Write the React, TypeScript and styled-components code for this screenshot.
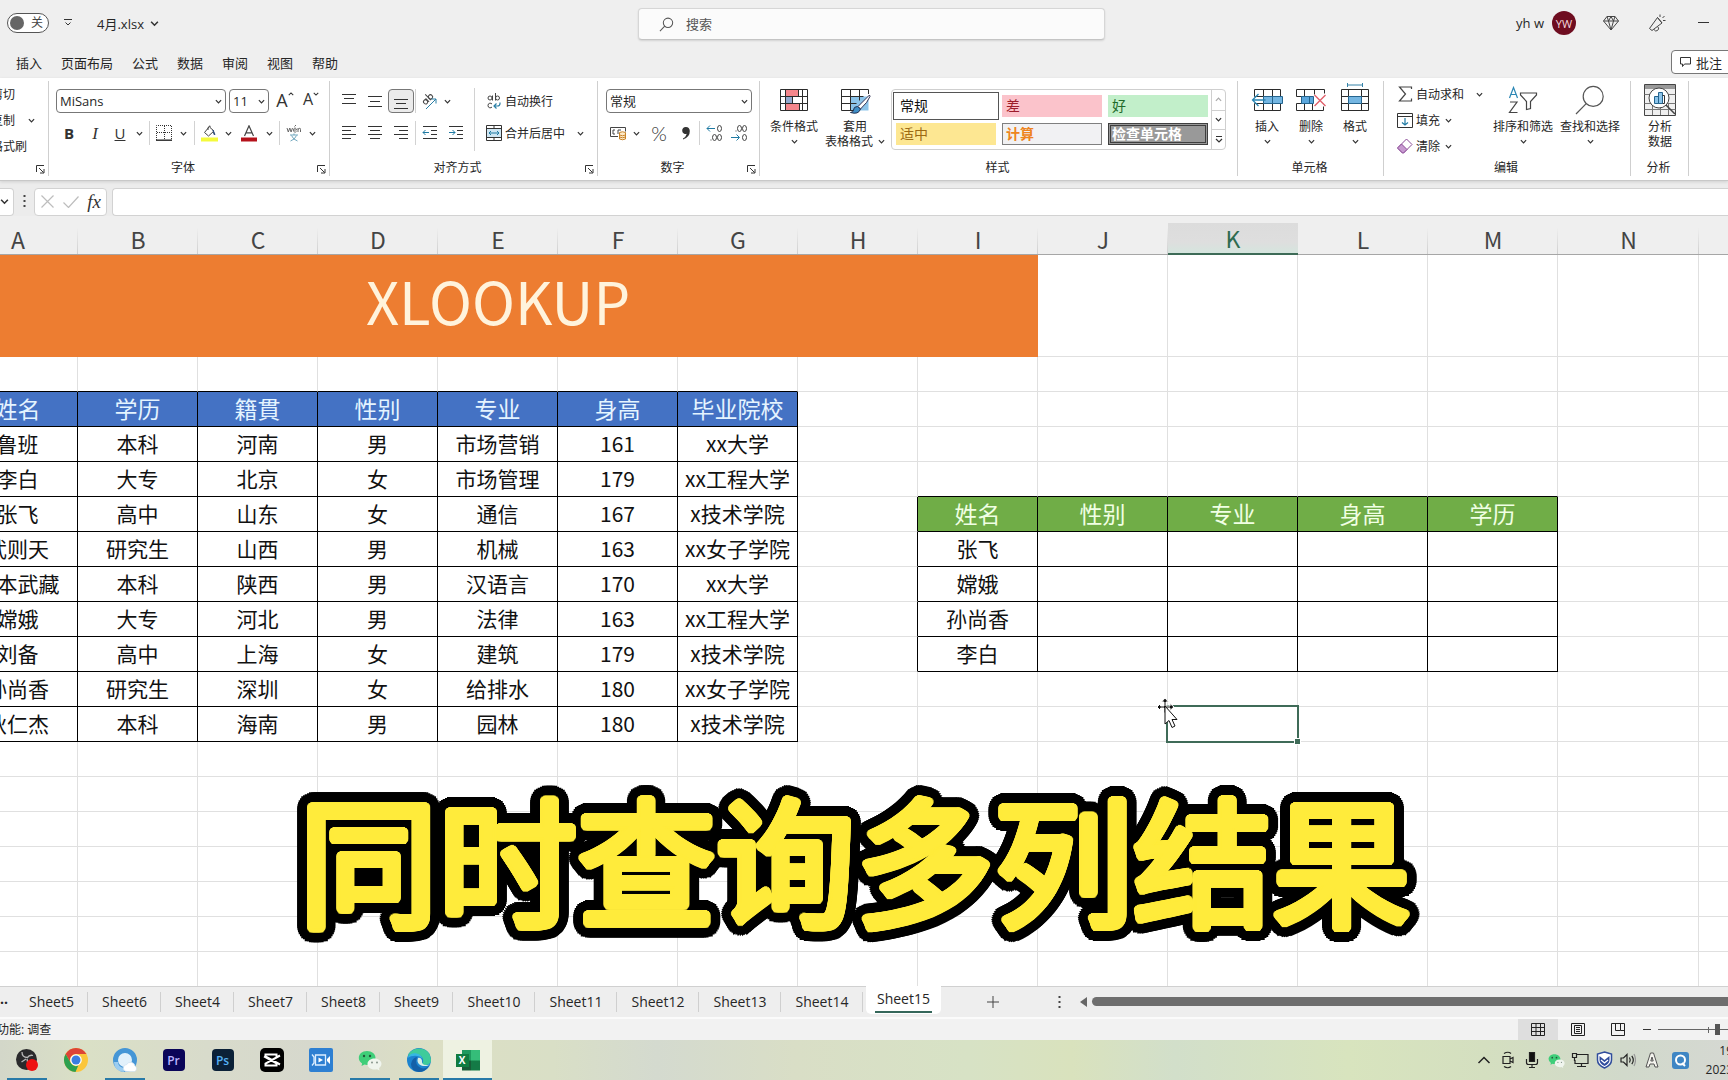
import React from "react";
import styled, { createGlobalStyle, css } from "styled-components";

const UI_FONT = `"Open Sans", "Noto Sans CJK SC", sans-serif`;
const CELL_FONT = `"Noto Sans CJK SC", sans-serif`;

const GlobalStyle = createGlobalStyle`
  *, *::before, *::after { box-sizing: border-box; }
  html, body, #root { height: 100%; }
  body { margin: 0; overflow: hidden; background: #efefef; font-family: ${UI_FONT}; font-size: 12px; color: #262626; }
  button, input, select { font: inherit; color: inherit; margin: 0; padding: 0; border: 0; background: none; border-radius: 0; }
  svg { display: block; flex: none; }
`;

/* ---------- shell ---------- */

const Shell = styled.div`
  display: flex;
  flex-direction: column;
  height: 100vh;
  overflow: hidden;
  position: relative;
`;

const TitleBar = styled.header`
  display: grid;
  grid-template-columns: 638fr 467fr 623fr;
  align-items: center;
  height: 46px;
  flex: none;
`;

const TitleLeft = styled.div`
  display: flex;
  align-items: center;
  padding-left: 7px;
  gap: 14px;
  font-size: 13px;
`;

const Toggle = styled.button`
  display: flex;
  align-items: center;
  justify-content: space-between;
  width: 42px;
  height: 20px;
  padding: 0 5px 0 2px;
  border: 1px solid #555;
  border-radius: 10px;
  background: #fff;
  font-size: 12px;
  line-height: 18px;
  color: #444;
  &::before {
    content: "";
    width: 14px;
    height: 14px;
    border-radius: 50%;
    background: #666;
  }
`;

const FileName = styled.button`
  display: flex;
  align-items: center;
  gap: 6px;
  margin-left: 10px;
`;

const IconButton = styled.button<{ $w?: number; $h?: number; $pressed?: boolean }>`
  display: flex;
  align-items: center;
  justify-content: center;
  flex: none;
  width: ${(p) => p.$w ?? 26}px;
  height: ${(p) => p.$h ?? 24}px;
  ${(p) =>
    p.$pressed &&
    css`
      border: 1px solid #777;
      border-radius: 4px;
      background: #ebebeb;
    `}
`;

const SizeButton = styled(IconButton)`
  align-items: flex-start;
  padding-top: 2px;
`;

const SearchBox = styled.label`
  display: flex;
  align-items: center;
  gap: 12px;
  height: 32px;
  padding-left: 20px;
  margin-top: 2px;
  background: #fbfbfb;
  border: 1px solid #d6d6d6;
  border-bottom-color: #c4c4c4;
  border-radius: 4px;
  box-shadow: 0 1px 2px rgba(0, 0, 0, 0.12);
  input {
    flex: 1;
    min-width: 0;
    outline: none;
    font-size: 13px;
  }
  input::placeholder { color: #555; opacity: 1; }
`;

const TitleRight = styled.div`
  display: flex;
  align-items: center;
  justify-content: flex-end;
  padding-right: 12px;
  font-size: 13px;
`;

const Avatar = styled.span`
  display: grid;
  place-items: center;
  width: 24px;
  height: 24px;
  margin: 0 22px 0 8px;
  border-radius: 50%;
  background: #6e0d20;
  color: #f3d9de;
  font-size: 11px;
`;

const MenuBar = styled.nav`
  display: flex;
  align-items: center;
  height: 32px;
  flex: none;
  gap: 19px;
  padding-left: 16px;
  font-size: 13px;
  button { flex: none; white-space: nowrap; }
`;

const CommentButton = styled.button`
  display: flex;
  align-items: center;
  gap: 4px;
  height: 24px;
  margin: 0 -8px 0 auto;
  padding: 0 13px 0 7px;
  border: 1px solid #777;
  border-radius: 4px;
  background: #fff;
`;

/* ---------- ribbon ---------- */

const Ribbon = styled.section`
  display: flex;
  height: 103px;
  flex: none;
  padding: 3px 0 4px;
  background: #fff;
  border-bottom: 1px solid #c8c8c8;
  box-shadow: 0 1px 3px rgba(0, 0, 0, 0.12);
  position: relative;
  overflow: hidden;
`;

const Group = styled.div<{ $w: number }>`
  display: flex;
  flex-direction: column;
  flex: none;
  width: ${(p) => p.$w}px;
  border-right: 1px solid #cfcfcf;
`;

const GroupBody = styled.div<{ $pad?: number }>`
  display: flex;
  flex: 1;
  padding-left: ${(p) => p.$pad ?? 0}px;
`;

const GroupFoot = styled.div`
  display: flex;
  align-items: center;
  height: 16px;
  line-height: 16px;
  text-align: center;
  white-space: nowrap;
  padding-right: 2px;
  span { flex: 1; }
  svg { margin-right: 1px; margin-top: 3px; }
`;

const Stack = styled.div<{ $pad?: string; $gap?: number }>`
  display: flex;
  flex-direction: column;
  padding: ${(p) => p.$pad ?? "0"};
  gap: ${(p) => p.$gap ?? 0}px;
`;

const Row = styled.div<{ $gap?: number }>`
  display: flex;
  align-items: center;
  height: 24px;
  gap: ${(p) => p.$gap ?? 0}px;
`;

const Rule = styled.span<{ $tight?: boolean; $tall?: boolean }>`
  flex: none;
  width: 1px;
  height: ${(p) => (p.$tall ? "63px" : "24px")};
  margin: ${(p) => (p.$tight ? "0 1px" : "0 3px")};
  background: #d2d2d2;
`;

const ComboFrame = styled.div<{ $w: number }>`
  display: grid;
  align-items: center;
  width: ${(p) => p.$w}px;
  height: 24px;
  border: 1px solid #777;
  border-radius: 4px;
  background: #fff;
  select {
    grid-area: 1 / 1;
    appearance: none;
    width: 100%;
    height: 22px;
    padding-left: 3px;
    font-size: 13px;
    outline: none;
  }
  svg { grid-area: 1 / 1; justify-self: end; margin-right: 3px; pointer-events: none; }
`;

const TextButton = styled.button`
  display: flex;
  align-items: center;
  height: 26px;
  white-space: nowrap;
`;

const IconCell = styled.span<{ $w?: number }>`
  display: grid;
  place-items: center;
  width: ${(p) => p.$w ?? 20}px;
`;

const BigButton = styled.button<{ $w: number }>`
  display: flex;
  flex-direction: column;
  align-items: center;
  width: ${(p) => p.$w}px;
  flex: none;
  align-self: flex-start;
  line-height: 15px;
  white-space: nowrap;
  small { display: flex; align-items: center; justify-content: center; gap: 5px; height: 15px; font-size: 12px; }
`;

const BigIcon = styled.span`
  display: grid;
  place-items: center;
  height: 38px;
`;

const Gallery = styled.div`
  display: flex;
  height: 61px;
  margin: 8px 0 0 3px;
  border: 1px solid #cfcfcf;
  border-radius: 4px;
  overflow: hidden;
`;

const Swatches = styled.div`
  display: grid;
  grid-template-columns: repeat(3, 100px);
  grid-auto-rows: 22px;
  gap: 6px;
  padding: 5px 3px 0 4px;
`;

const Swatch = styled.button<{ $bg: string; $fg: string; $kind?: "current" | "calc" | "check" }>`
  display: flex;
  align-items: center;
  padding-left: 4px;
  background: ${(p) => p.$bg};
  color: ${(p) => p.$fg};
  font-size: 14px;
  line-height: 16px;
  white-space: nowrap;
  ${(p) => p.$kind === "current" && css`outline: 1px solid #555; outline-offset: 2px;`}
  ${(p) => p.$kind === "calc" && css`border: 1px solid #7f7f7f; font-weight: 700; padding-left: 3px;`}
  ${(p) => p.$kind === "check" && css`border: 3px double #3f3f3f; font-weight: 700; padding-left: 1px;`}
`;

const GalleryScroll = styled.div`
  display: grid;
  grid-template-rows: repeat(3, 1fr);
  width: 14px;
  border-left: 1px solid #cfcfcf;
  button { display: grid; place-items: center; }
  button + button { border-top: 1px solid #cfcfcf; }
`;

const Glyph = styled.span<{ $italic?: boolean; $bold?: boolean; $size?: number; $serif?: boolean; $light?: boolean }>`
  font-family: ${(p) => (p.$serif ? `"Liberation Serif", serif` : p.$light ? `Lato, sans-serif` : UI_FONT)};
  font-style: ${(p) => (p.$italic ? "italic" : "normal")};
  font-weight: ${(p) => (p.$bold ? 700 : p.$light ? 300 : 400)};
  font-size: ${(p) => p.$size ?? 15}px;
  color: #333;
  line-height: 1;
`;

/* ---------- formula bar ---------- */

const FormulaBar = styled.section`
  display: flex;
  align-items: center;
  height: 35px;
  flex: none;
  padding-top: 6px;
  background: #ececec;
`;

const NameBox = styled.button`
  display: grid;
  place-items: center;
  width: 14px;
  height: 28px;
  padding-right: 4px;
  border: 1px solid #d2d2d2;
  border-left: 0;
  border-radius: 0 4px 4px 0;
  background: #fff;
`;

const Dots = styled.span<{ $w?: number }>`
  width: ${(p) => p.$w ?? 20}px;
  display: grid;
  place-items: center;
`;

const FxBox = styled.div`
  display: flex;
  align-items: center;
  width: 73px;
  height: 28px;
  border: 1px solid #d2d2d2;
  border-radius: 4px;
  background: #fff;
`;

const FormulaInput = styled.input`
  && {
    flex: 1;
    height: 28px;
    margin-left: 5px;
    padding: 0 8px;
    border: 1px solid #d2d2d2;
    border-right: 0;
    border-radius: 4px 0 0 4px;
    background: #fff;
    outline: none;
  }
`;

/* ---------- sheet ---------- */

const SheetArea = styled.main`
  flex: 1;
  min-height: 0;
  overflow: hidden;
  background: #fff;
  position: relative;
`;

const SheetTable = styled.table`
  table-layout: fixed;
  width: 1861px;
  margin-left: -42px;
  border-collapse: separate;
  border-spacing: 0;
  font-family: ${CELL_FONT};
  color: #111;
  td, th { text-align: center; white-space: nowrap; overflow: visible; }
`;

const ColumnHead = styled.th<{ $on?: boolean }>`
  height: 39px;
  font-size: 23px;
  font-weight: 400;
  line-height: 30px;
  padding: 7px 0 0;
  color: ${(p) => (p.$on ? "#2f6b50" : "#444")};
  border-bottom: ${(p) => (p.$on ? "2px solid #3d6b57" : "1px solid #a6a6a6")};
  background: ${(p) =>
    p.$on
      ? "linear-gradient(#efefef 7px, #dcdcdc 7px, #dedede 70%, #d5e5de)"
      : "linear-gradient(to bottom, #efefef 30%, #cfcfcf) right / 1px 100% no-repeat, #efefef"};
`;

const TitleCell = styled.td`
  height: 102px;
  padding: 0 0 12px;
  background: #ed7d31;
  color: #fff3dc;
  font-size: 58px;
  line-height: 80px;
`;

type Fill = "none" | "blue" | "green";
const fills: Record<Fill, string> = { none: "transparent", blue: "#4472c4", green: "#70ad47" };

const Cell = styled.td<{ $right: boolean; $bottom: boolean; $fill?: Fill; $h?: number; $active?: boolean }>`
  height: ${(p) => p.$h ?? 35}px;
  padding: 0 0 2px;
  border-right: 1px solid ${(p) => (p.$right ? "#000" : "#e0e0e0")};
  border-bottom: 1px solid ${(p) => (p.$bottom ? "#000" : "#e0e0e0")};
  background: ${(p) => fills[p.$fill ?? "none"]};
  color: ${(p) => (p.$fill === "blue" ? "#e4f4ff" : p.$fill === "green" ? "#f0ffe4" : "#111")};
  font-size: ${(p) => (p.$fill && p.$fill !== "none" ? 23 : 21)}px;
  line-height: 30px;
  ${(p) => p.$active && css`position: relative; z-index: 1;`}
`;

const Selection = styled.span`
  position: absolute;
  inset: -2px;
  border: 2px solid #3f6b58;
  &::after {
    content: "";
    position: absolute;
    right: -4px;
    bottom: -4px;
    width: 7px;
    height: 7px;
    background: #3f6b58;
    border: 1px solid #fff;
  }
`;

const Pointer = styled.svg`
  position: absolute;
  left: -11px;
  top: -9px;
  z-index: 1;
`;

const ring = (radius: number, color: string, steps: number) =>
  Array.from({ length: steps }, (_, i) => {
    const a = (i / steps) * Math.PI * 2;
    return `${(Math.cos(a) * radius).toFixed(1)}px ${(Math.sin(a) * radius).toFixed(1)}px 0 ${color}`;
  }).join(", ");

const Caption = styled.p`
  position: absolute;
  inset: auto 0 30px;
  margin: 0;
  padding-right: 18px;
  text-align: center;
  white-space: nowrap;
  font-family: ${CELL_FONT};
  font-size: 139px;
  font-weight: 400;
  line-height: 200px;
  color: #ffeb3b;
  pointer-events: none;
  z-index: 2;
  text-shadow: ${ring(2, "#ffeb3b", 12)}, ${ring(4, "#ffeb3b", 24)}, ${ring(9, "#000", 24)}, ${ring(14, "#000", 40)};
`;

/* ---------- sheet tabs and status ---------- */

const TabStrip = styled.section`
  display: flex;
  align-items: stretch;
  height: 33px;
  flex: none;
  background: #eeeeee;
  border-top: 1px solid #d0d0d0;
  border-bottom: 2px solid #fbfbfb;
  font-size: 14px;
`;

const More = styled.button`
  && {
    width: 15px;
    padding-right: 9px;
    font-weight: 700;
    flex: none;
  }
`;

const SheetTab = styled.button<{ $wide?: boolean }>`
  && {
    flex: none;
    width: ${(p) => (p.$wide ? 82 : 73)}px;
    padding-bottom: 2px;
    background: linear-gradient(#cfcfcf, #cfcfcf) right 5px / 1px 20px no-repeat;
  }
`;

const ActiveTab = styled.button`
  && {
    flex: none;
    width: 75px;
    height: 28px;
    margin: -1px 4px 0 3px;
    padding: 0 9px;
    background: #fff;
    border-radius: 0 0 5px 5px;
  }
  span { display: block; height: 25px; line-height: 22px; border-bottom: 2px solid #35675a; }
`;

const AddTab = styled.button`
  display: grid;
  place-items: center;
  width: 96px;
  flex: none;
`;

const ScrollTrack = styled.div`
  display: flex;
  flex: 1;
  align-items: center;
  gap: 5px;
  margin-left: 3px;
  &::after { content: ""; flex: 1; height: 9px; border-radius: 5px 0 0 5px; background: #6e6e6e; margin-top: -1px; }
`;

const StatusBar = styled.footer`
  display: flex;
  align-items: center;
  height: 21px;
  flex: none;
  background: #f2f2f2;
  overflow: hidden;
`;

const StatusText = styled.span`
  margin: 0 auto 0 -3px;
  line-height: 20px;
`;

const ViewButton = styled.button<{ $on?: boolean }>`
  display: grid;
  place-items: center;
  width: 40px;
  height: 21px;
  background: ${(p) => (p.$on ? "#dedede" : "transparent")};
`;

const ZoomSlider = styled.input`
  && {
    appearance: none;
    width: 100px;
    height: 20px;
    margin: 0 -30px 0 2px;
    flex: none;
    background:
      linear-gradient(#666, #666) center / 1px 6px no-repeat,
      linear-gradient(#666, #666) center / 100% 1px no-repeat;
  }
  &::-webkit-slider-thumb {
    appearance: none;
    width: 5px;
    height: 11px;
    background: #555;
  }
`;

/* ---------- taskbar ---------- */

const Taskbar = styled.footer`
  display: flex;
  height: 40px;
  flex: none;
  padding-left: 2px;
  background: linear-gradient(90deg, #d3d7c9 0%, #dae0c6 5%, #d8dbcb 12%, #d6d8cd 18%, #dcdfc4 25%, #d9dfc6 32%, #d4dacf 38%, #d9dec6 46%, #d7e2c5 56%, #d9e2bd 62%, #d2dfca 68%, #d8e4be 78%, #d4dfc0 86%, #d1d9cb 94%, #d5d8d2 100%);
  overflow: hidden;
`;

const TaskApp = styled.button<{ $running?: boolean; $front?: boolean }>`
  display: grid;
  place-items: center;
  width: 49px;
  flex: none;
  background:
    ${(p) =>
      p.$running || p.$front
        ? `linear-gradient(#287aa8, #287aa8) bottom / ${p.$front ? "100%" : "40px"} 2px no-repeat, `
        : ""}
    ${(p) => (p.$front ? "linear-gradient(#eef2e2, #eef2e2)" : "none")};
`;

const Tray = styled.div`
  display: flex;
  align-items: center;
  margin-left: auto;
`;

const TrayButton = styled.button<{ $w?: number }>`
  display: grid;
  place-items: center;
  width: ${(p) => p.$w ?? 24}px;
  height: 40px;
  flex: none;
`;

const Clock = styled.div`
  width: 23px;
  margin-left: 9px;
  overflow: hidden;
  line-height: 19px;
  font-size: 12px;
  time { display: block; width: 28px; text-align: right; }
`;

/* ---------- icons ---------- */

const Chevron = ({ up, size = 7, color = "#333" }: { up?: boolean; size?: number; color?: string }) => (
  <svg width={size} height={size} viewBox="0 0 8 8" fill="none" stroke={color} strokeWidth="1.4">
    <path d={up ? "M1 5.5 4 2.5 7 5.5" : "M1 2.5 4 5.5 7 2.5"} />
  </svg>
);

const Launcher = () => (
  <svg width="9" height="9" viewBox="0 0 9 9" fill="none" stroke="#333">
    <path d="M.5 7V.5H8M3 3l4.5 4.5M8 4v4H4" />
  </svg>
);

const Lines = ({ rows }: { rows: [number, number, number][] }) => (
  <svg width="15" height="16" viewBox="0 0 15 16" stroke="#333" fill="none">
    {rows.map(([x1, x2, y], i) => (
      <path key={i} d={`M${x1} ${y + 0.5}H${x2}`} />
    ))}
  </svg>
);

const SearchIcon = ({ size, thin }: { size: number; thin?: boolean }) => (
  <svg width={size} height={size} viewBox="0 0 16 16" fill="none" stroke="#555" strokeWidth={thin ? 0.6 : 1.1}>
    <circle cx="9.6" cy="6.2" r="5" />
    <path d="M6.1 9.8 1 15" />
  </svg>
);

const GridIcon = ({ children }: { children?: React.ReactNode }) => (
  <svg width="32" height="28" viewBox="0 0 32 28" fill="none" stroke="#2b2b2b">
    {children}
  </svg>
);

const WrapIcon = () => (
  <svg width="16" height="18" viewBox="0 0 16 18" fill="none" stroke="#444">
    <ellipse cx="4" cy="6" rx="2" ry="2" />
    <path d="M6.500 3.500v5M9.500 1v7.500" />
    <ellipse cx="11.500" cy="6" rx="2" ry="2" />
    <path d="M6 12q-1-1-2.200-.8Q2 11.500 2 13.500t1.800 2.300Q5 16 6 15" />
    <path stroke="#2a7fa5" strokeWidth="1.200" d="M14 10.500v1q0 2.500-2.500 2.500H8M10.500 11.500 8 14l2.500 2.500" />
  </svg>
);

const MergeIcon = () => (
  <svg width="16" height="16" viewBox="0 0 16 16" fill="none" stroke="#333">
    <path fill="#cfe6f3" d="M.5 3.500h15v9H.5z" />
    <path d="M.5.5h15v15H.5zM8 .5v3M8 12.500v3" />
    <path stroke="#1f7aa3" d="M3 8h10M5 6 3 8l2 2M11 6l2 2-2 2" />
  </svg>
);

const Indent = ({ out }: { out?: boolean }) => (
  <svg width="16" height="16" viewBox="0 0 16 16" fill="none" stroke="#333">
    <path d="M1 1.500h14M9 5.500h6M9 9.500h6M1 13.500h14" />
    <path stroke="#1f7aa3" d={out ? "M1 7.500h6M3.500 5 1 7.500 3.500 10" : "M1 7.500h6M4.500 5 7 7.500 4.500 10"} />
  </svg>
);

const AngleIcon = () => (
  <svg width="18" height="18" viewBox="0 0 18 18" fill="none" stroke="#444">
    <g transform="rotate(-45 7 7)">
      <ellipse cx="4" cy="8" rx="2" ry="2.200" />
      <path d="M6.500 5.500v5M9 2.500v8" />
      <ellipse cx="11" cy="8" rx="2" ry="2.200" />
    </g>
    <path stroke="#2a7fa5" d="M6 17 16 7M11.500 7H16v4.500" />
  </svg>
);

const BorderIcon = () => (
  <svg width="16" height="16" viewBox="0 0 16 16" fill="none" stroke="#333">
    <path strokeDasharray="1 1" d="M.5 15V.5h15V15M8.500 1v14M1 7.500h14" />
    <path strokeWidth="1.500" d="M0 15.200h16" />
  </svg>
);

const BucketIcon = () => (
  <svg width="17" height="17" viewBox="0 0 17 17" fill="none" stroke="#444">
    <path d="M8 2 3.500 7.500l4 3.500L13 6 9 2.500V.8L7 2.500V5" />
    <path fill="#34507c" stroke="#34507c" d="m12 5 2 4.500h-1z" />
    <path fill="#f4fa3c" stroke="none" d="M0 12.500h17v4H0z" />
  </svg>
);

const FontColorIcon = () => (
  <svg width="16" height="17" viewBox="0 0 16 17" fill="none" stroke="#444" strokeWidth="1.200">
    <path d="M3.500 11 8 .8 12.500 11M5 7.800h6" />
    <path fill="#b5121b" stroke="none" d="M0 12.500h16v4H0z" />
  </svg>
);

const PhoneticIcon = () => (
  <svg width="16" height="18" viewBox="0 0 16 18" fill="none" stroke="#666">
    <path d="M1 4l1.300 4L3.800 4l1.300 4L6.500 4M7.500 6h3c0-2.500-3-2.500-3 0s2 2.500 3 1.500M8.500 2.500 10 1M12 8V4m0 1.500Q14.500 3 14.500 5.500V8" />
    <path stroke="#6fa6bd" d="M4 11h8M8 9.500V11M5.500 11.500q1.500 4 6 5.500M10.500 11.500Q9 15.500 4.500 17" />
  </svg>
);

const CurrencyIcon = () => (
  <svg width="17" height="15" viewBox="0 0 17 15" fill="none" stroke="#444">
    <path d="M8 10.500H.5v-9h15v4M5 4H3v4h2M8 8V4h3" />
    <path stroke="#c98428" fill="#fde9c8" d="M9.500 6.500q3-1.500 6 0v6.500q-3 1.500-6 0zM9.500 9q3 1.500 6 0M9.500 11q3 1.500 6 0" />
  </svg>
);

const DecimalIcon = ({ more }: { more?: boolean }) => (
  <svg width="17" height="18" viewBox="0 0 17 18" fill="none" stroke="#444">
    {more ? (
      <>
        <ellipse cx="13.500" cy="4.500" rx="2" ry="3" />
        <ellipse cx="8.500" cy="13.500" rx="2" ry="3" />
        <ellipse cx="13.500" cy="13.500" rx="2" ry="3" />
        <path d="M4.500 16h1" />
        <path stroke="#1f7aa3" d="M1 4.500h8M4 1.500l-3 3 3 3" />
      </>
    ) : (
      <>
        <ellipse cx="8.500" cy="4.500" rx="2" ry="3" />
        <ellipse cx="13.500" cy="4.500" rx="2" ry="3" />
        <ellipse cx="13.500" cy="13.500" rx="2" ry="3" />
        <path d="M4.500 7h1" />
        <path stroke="#1f7aa3" d="M0 13.500h8M5.500 10.500l3 3-3 3" />
      </>
    )}
  </svg>
);

const ConditionalIcon = () => (
  <GridIcon>
    <path fill="#f4868c" stroke="none" d="M7.500 3.500h13v7h-13zM7.500 17.500h14v7h-14z" />
    <path fill="#92a9cf" stroke="none" d="M7.500 10.500h7v7h-7z" />
    <path d="M2.500 3.500h27v21h-27zM2.500 10.500h27M2.500 17.500h27M7.500 3.500v21M24.500 3.500v21M20.500 3.500v7M14.500 10.500v7M21.500 17.500v7" />
  </GridIcon>
);

const TableFormatIcon = () => (
  <GridIcon>
    <path fill="#8cc4ea" stroke="none" d="M11.500 10.500h18v14h-18z" />
    <path d="M29.500 8v-4.500h-27v21h14M2.500 10.500h22M2.500 17.500h15M11.500 3.500v21M20.500 3.500v11" />
    <path fill="#fff" stroke="#335" d="M30.500 9 19 20.500l2.500 2.500Q29 16 31 10.500z" />
    <path fill="#3f8fc7" stroke="#235" d="M18.500 20.500q-4 0-4 3.500 0 2-3 2.500 8 2.500 10-3.500z" />
  </GridIcon>
);

const brick = "M3.500 3.500h26v7h-26zM3.500 17.500h26v7h-26zM12.500 3.500v7M21.500 3.500v7M12.500 17.500v7M21.500 17.500v7";

const InsertIcon = () => (
  <GridIcon>
    <path d={brick} />
    <path fill="#74b6e2" stroke="#24648e" d="M12.500 10.500h19v7h-19zM21.500 10.500v7" />
    <path stroke="#2a86b4" strokeWidth="1.300" d="M1.500 14h13M7.500 8 1.500 14l6 6" />
  </GridIcon>
);

const DeleteIcon = () => (
  <GridIcon>
    <path d="M18 3.500H1.500v7H18M1.500 24.500h27M1.500 17.500H18M1.500 17.500v7M9.500 3.500v7M9.500 17.500v7M17.500 17.500v7M18 3.500h11.500v4M19.500 3.500v5M28.500 20.500v4" />
    <path fill="#5ba7dd" stroke="#24648e" d="M6.500 10.500h12v7h-12zM14.500 10.500v7" />
    <path stroke="#e0606c" strokeWidth="1.400" d="m19.500 9 11 11M30.500 9l-11 11" />
  </GridIcon>
);

const FormatIcon = () => (
  <svg width="30" height="34" viewBox="0 0 30 34" fill="none" stroke="#2b2b2b">
    <path stroke="#3482a8" d="M7.500 0v4M22.500 0v4M7.500 2h15" />
    <path d="M1.500 6.500h27v21h-27zM1.500 13.500h27M1.500 20.500h27M8.500 6.500v21M21.500 6.500v21" />
    <path fill="#74b6e2" stroke="#24648e" d="M8.500 13.500h13v7h-13z" />
  </svg>
);

const SigmaIcon = () => (
  <svg width="15" height="16" viewBox="0 0 15 16" fill="none" stroke="#444" strokeWidth="1.200">
    <path d="M13.500 3V1H1.500l6 7-6 7h12v-2.500" />
  </svg>
);

const FillIcon = () => (
  <svg width="16" height="15" viewBox="0 0 16 15" fill="none" stroke="#333">
    <path d="M.5.5h15v14H.5zM.5 3.500h15" />
    <path stroke="#1f7aa3" strokeWidth="1.200" d="M8 5v7M5 9.500 8 12l3-2.500" />
  </svg>
);

const EraserIcon = () => (
  <svg width="16" height="16" viewBox="0 0 16 16" fill="none" stroke="#8b4a97">
    <path fill="#fff" d="M9.500 1 15 6.500 6.500 15h-1L1 10.500V9.500z" />
    <path fill="#c79ad0" d="M4.500 6 10 11.500 6.500 15h-1L1 10.500V9.500z" />
  </svg>
);

const SortIcon = () => (
  <svg width="30" height="28" viewBox="0 0 30 28" fill="none" strokeWidth="1.200">
    <path stroke="#2a86b4" d="M1.500 12 5.500 1.500 9.500 12M3 8.500h5" />
    <path stroke="#444" d="M2 16h7L1.500 26.500H9.500M12.500 7h16v2l-6 6.500v7l-4 1v-8l-6-6.500z" />
  </svg>
);

const AnalyzeIcon = () => (
  <svg width="32" height="32" viewBox="0 0 32 32" fill="none" stroke="#444">
    <path fill="#f0f0f0" d="M.5.5h31v31H.5z" />
    <path fill="#999" stroke="none" d="M1 1h30v4H1z" />
    <path stroke="#777" d="M.5 10.500h31M.5 19.500h31M.5 25.500h31M8.500 19v12M16.500 19v12M24.500 19v12" />
    <circle cx="15" cy="14" r="10" fill="#fff" />
    <path d="m22 21 9 9" strokeWidth="1.500" />
    <path fill="#8cc4ea" stroke="#24648e" d="M10.500 12.500h4v7h-4zM14.500 8.500h4v11h-4z" />
    <path stroke="#333" d="M18.500 11.500h2v8h-2" />
  </svg>
);

const Diamond = () => (
  <svg width="16" height="16" viewBox="0 0 16 16" fill="none" stroke="#444">
    <path d="M4 1.500h8l3.500 4.500L8 15 .5 6zM.5 6h15M4 1.500 5.500 6 8 15l2.500-9L12 1.500M5.500 6 8 1.500 10.500 6" />
  </svg>
);

const Megaphone = () => (
  <svg width="18" height="18" viewBox="0 0 18 18" fill="none" stroke="#444">
    <path d="M9.500 3.500 1.500 14.500l2.500 2 10-7.500zM9.500 3.500l4.500 5.500M6 15.500q1.500 2.500 3.500 1t.5-3.500M12 3V.5M14.500 4l2-2M15 6.500h2.500" />
  </svg>
);

const WeChat = ({ size }: { size: number }) => (
  <svg width={size} height={size} viewBox="0 0 24 24">
    <path fill="#3fce79" d="M9 3c5 0 8.500 3 8.500 7S14 17 9 17q-1.300 0-2.500-.4L3.500 18l.6-2.600Q.8 13.300.8 10C.8 6 4 3 9 3z" />
    <path fill="#f0f5ee" d="M16.500 10.500c4 0 7 2.400 7 5.500q0 2.600-2.500 4.300l.5 2.200-2.500-1.300q-1 .3-2.500.3c-4 0-7-2.400-7-5.500s3-5.500 7-5.500z" />
    <g fill="#24583a"><circle cx="6" cy="8" r="1.200" /><circle cx="12" cy="8" r="1.200" /></g>
    <g fill="#7f8f85"><circle cx="14" cy="14.500" r=".9" /><circle cx="19" cy="14.500" r=".9" /></g>
  </svg>
);

const Obs = () => (
  <svg width="24" height="24" viewBox="0 0 24 24">
    <circle cx="11.500" cy="11.500" r="10.500" fill="#2a2a2c" />
    <path fill="none" stroke="#b8b8b8" strokeWidth="1.300" d="M7 4q0 5.500 5.500 5.500M11 11 6.500 14M18 7.500q-3.500-1-6 2.500M12 11l1 5" />
    <circle cx="17" cy="17" r="6" fill="#ee1111" />
  </svg>
);

const Chrome = () => (
  <svg width="24" height="24" viewBox="0 0 24 24">
    <circle cx="12" cy="12" r="12" fill="#fbc63b" />
    <path fill="#dd4437" d="M12 0a12 12 0 0 1 10.400 6H12a6 6 0 0 0-5.200 9L1.600 6A12 12 0 0 1 12 0z" />
    <path fill="#2da04f" d="M1.600 6 6.800 15a6 6 0 0 0 7.500 2.500L11.500 24A12 12 0 0 1 1.600 6z" />
    <circle cx="12" cy="12" r="5.800" fill="#fff" />
    <circle cx="12" cy="12" r="4.500" fill="#3b7de0" />
  </svg>
);

const CloudBrowser = () => (
  <svg width="24" height="24" viewBox="0 0 24 24">
    <circle cx="12" cy="12" r="9.500" fill="#e2f1fb" stroke="#4596d6" strokeWidth="5" />
    <path fill="none" stroke="#9ccdf0" strokeWidth="4" d="M3 14q0 7 8 8" />
    <path fill="#fff" stroke="#c6dcec" strokeWidth=".6" d="M14 23.500a3.500 3.500 0 0 1-.3-7 4.500 4.500 0 0 1 8.300 1.500 3 3 0 0 1-.5 5.500z" />
  </svg>
);

const Capcut = () => (
  <svg width="24" height="24" viewBox="0 0 24 24" fill="none" stroke="#fff" strokeWidth="2">
    <rect width="24" height="24" rx="5" fill="#000" stroke="none" />
    <path d="M20 7.500 5.500 15.500v2h11v-2L4 8.500M20 16.500 5.500 8.500v-2h11v2" />
  </svg>
);

const Recorder = () => (
  <svg width="24" height="24" viewBox="0 0 24 24" fill="none" stroke="#dceeff" strokeWidth="1.300">
    <rect width="24" height="24" rx="2" fill="#2d7fd2" stroke="none" />
    <path d="M3 6.500 5 9v6l-2 2.500M6.500 7h10v10h-10z" />
    <path fill="#fff" stroke="none" d="m9.500 9.500 4.500 2.500-4.500 2.500zM18 11l3-3v8l-3-3z" />
  </svg>
);

const Edge = () => (
  <svg width="24" height="24" viewBox="0 0 24 24">
    <circle cx="12" cy="12" r="12" fill="#1c83cf" />
    <path fill="#3ecb9b" d="M1 8C4-2 23-3 24 12c0 5-6 6-9 4 2-2 2-9-5-9-4 0-7 0-9 1z" />
    <path fill="#36b7e3" d="M.5 10C3 3 14 4 15.500 11 12 6.500 5 7 .5 10z" />
    <path fill="#1460a8" d="M10 9q-3 8 4 11 4 1.500 8-2-4 6-10 6-8-1-8-8 1-6 6-7z" />
    <path fill="#d7eee6" d="M11 10c-2 5 2 8.500 8 8 2-.2 3-1 3.500-1.500-5 1.500-8-.5-7.500-3 .5-2-2-4.500-4-3.500z" />
  </svg>
);

const ExcelBlocks = styled.span`
  display: grid;
  grid-template-columns: 16px 10px;
  align-items: center;
  width: 24px;
  height: 21px;
  background: linear-gradient(90deg, transparent 6px, #1f9a5f 6px 15px, #35bd79 15px) top / 100% 50% no-repeat,
    linear-gradient(90deg, transparent 6px, #185c37 6px 15px, #147a46 15px) bottom / 100% 50% no-repeat;
  span { width: 13px; height: 13px; background: #107c41; color: #fff; font-size: 10px; line-height: 13px; font-weight: 700; text-align: center; }
`;

const AdobeTile = styled.span<{ $bg: string; $fg: string }>`
  display: grid;
  place-items: center;
  width: 22px;
  height: 22px;
  border-radius: 4px;
  background: ${(p) => p.$bg};
  color: ${(p) => p.$fg};
  font-size: 12px;
  font-weight: 600;
`;

/* ---------- data ---------- */

const menus = ["插入", "页面布局", "公式", "数据", "审阅", "视图", "帮助"];
const columns = [..."ABCDEFGHIJKLMNO"];
const widths = [120, 120, 120, 120, 120, 120, 120, 120, 120, 130, 130, 130, 130, 141, 120];

const people = [
  ["姓名", "学历", "籍貫", "性别", "专业", "身高", "毕业院校"],
  ["鲁班", "本科", "河南", "男", "市场营销", "161", "xx大学"],
  ["李白", "大专", "北京", "女", "市场管理", "179", "xx工程大学"],
  ["张飞", "高中", "山东", "女", "通信", "167", "x技术学院"],
  ["武则天", "研究生", "山西", "男", "机械", "163", "xx女子学院"],
  ["宫本武藏", "本科", "陕西", "男", "汉语言", "170", "xx大学"],
  ["嫦娥", "大专", "河北", "男", "法律", "163", "xx工程大学"],
  ["刘备", "高中", "上海", "女", "建筑", "179", "x技术学院"],
  ["孙尚香", "研究生", "深圳", "女", "给排水", "180", "xx女子学院"],
  ["狄仁杰", "本科", "海南", "男", "园林", "180", "x技术学院"],
];
const lookup = [["姓名", "性别", "专业", "身高", "学历"], ["张飞"], ["嫦娥"], ["孙尚香"], ["李白"]];

const PEOPLE_ROW = 1;
const LOOKUP_ROW = 4;
const LOOKUP_COL = 8;

const inPeople = (r: number, c: number) => r >= PEOPLE_ROW && r < PEOPLE_ROW + 10 && c < 7;
const inLookup = (r: number, c: number) => r >= LOOKUP_ROW && r < LOOKUP_ROW + 5 && c >= LOOKUP_COL && c < LOOKUP_COL + 5;
const framed = (r: number, c: number) => inPeople(r, c) || inLookup(r, c);

const sheets = ["Sheet5", "Sheet6", "Sheet4", "Sheet7", "Sheet8", "Sheet9", "Sheet10", "Sheet11", "Sheet12", "Sheet13", "Sheet14"];

/* ---------- sections ---------- */

const Drop = ({ w, label }: { w: number; label: string }) => (
  <IconButton $w={w} aria-label={label}>
    <Chevron />
  </IconButton>
);

const Foot = ({ label, launcher }: { label?: string; launcher?: boolean }) => (
  <GroupFoot>
    <span>{label}</span>
    {launcher && <Launcher />}
  </GroupFoot>
);

const Combo = ({ w, label, value }: { w: number; label: string; value: string }) => (
  <ComboFrame $w={w}>
    <select aria-label={label} defaultValue={value}>
      <option>{value}</option>
    </select>
    <Chevron />
  </ComboFrame>
);

const ClipboardRows = styled(Stack)`
  margin-left: -9px;
`;

function RibbonBar() {
  return (
    <Ribbon>
      <Group $w={49}>
        <GroupBody>
          <ClipboardRows>
            <TextButton>剪切</TextButton>
            <TextButton>
              复制
              <IconCell $w={32}><Chevron /></IconCell>
            </TextButton>
            <TextButton>格式刷</TextButton>
          </ClipboardRows>
        </GroupBody>
        <Foot launcher />
      </Group>

      <Group $w={281}>
        <GroupBody $pad={7}>
          <Stack $pad="8px 0 0" $gap={8}>
            <Row $gap={3}>
              <Combo w={170} label="字体" value="MiSans" />
              <Combo w={40} label="字号" value="11" />
              <Row>
                <SizeButton $w={26} aria-label="增大字号"><Glyph $size={18}>A</Glyph><Chevron up size={6} /></SizeButton>
                <SizeButton $w={26} aria-label="减小字号"><Glyph $size={16}>A</Glyph><Chevron size={6} /></SizeButton>
              </Row>
            </Row>
            <Row>
              <IconButton $w={26} aria-label="加粗"><Glyph $bold>B</Glyph></IconButton>
              <IconButton $w={26} aria-label="倾斜"><Glyph $italic $serif $size={17}>I</Glyph></IconButton>
              <IconButton $w={24} aria-label="下划线"><Glyph><u>U</u></Glyph></IconButton>
              <Drop w={14} label="下划线选项" />
              <Rule />
              <IconButton $w={22} aria-label="边框"><BorderIcon /></IconButton>
              <Drop w={16} label="边框选项" />
              <Rule />
              <IconButton $w={22} aria-label="填充颜色"><BucketIcon /></IconButton>
              <Drop w={16} label="填充颜色选项" />
              <IconButton $w={26} aria-label="字体颜色"><FontColorIcon /></IconButton>
              <Drop w={14} label="字体颜色选项" />
              <Rule />
              <IconButton $w={22} aria-label="拼音"><PhoneticIcon /></IconButton>
              <Drop w={14} label="拼音选项" />
            </Row>
          </Stack>
        </GroupBody>
        <Foot label="字体" launcher />
      </Group>

      <Group $w={268}>
        <GroupBody $pad={6}>
          <Stack $pad="8px 0 0" $gap={8}>
            <Row>
              <IconButton aria-label="顶端对齐"><Lines rows={[[0, 14, 1], [2, 12, 5], [0, 14, 10]]} /></IconButton>
              <IconButton aria-label="垂直居中"><Lines rows={[[0, 14, 3], [2, 12, 8], [0, 14, 13]]} /></IconButton>
              <IconButton $pressed aria-label="底端对齐"><Lines rows={[[0, 14, 6], [2, 12, 10], [0, 14, 15]]} /></IconButton>
              <Rule $tight />
              <IconButton $w={24} aria-label="方向"><AngleIcon /></IconButton>
              <Drop w={12} label="方向选项" />
            </Row>
            <Row>
              <IconButton aria-label="左对齐"><Lines rows={[[0, 14, 1], [0, 9, 5], [0, 14, 9], [0, 9, 13]]} /></IconButton>
              <IconButton aria-label="居中"><Lines rows={[[0, 14, 1], [2, 12, 5], [0, 14, 9], [2, 12, 13]]} /></IconButton>
              <IconButton aria-label="右对齐"><Lines rows={[[0, 14, 1], [5, 14, 5], [0, 14, 9], [5, 14, 13]]} /></IconButton>
              <Rule $tight />
              <IconButton aria-label="减少缩进"><Indent out /></IconButton>
              <IconButton aria-label="增加缩进"><Indent /></IconButton>
            </Row>
          </Stack>
          <Stack $pad="7px 5px 0 2px"><Rule $tall /></Stack>
          <Stack $pad="7px 0 0" $gap={6}>
            <TextButton><IconCell $w={22}><WrapIcon /></IconCell>自动换行</TextButton>
            <TextButton><IconCell $w={22}><MergeIcon /></IconCell>合并后居中<IconCell $w={30}><Chevron /></IconCell></TextButton>
          </Stack>
        </GroupBody>
        <Foot label="对齐方式" launcher />
      </Group>

      <Group $w={162}>
        <GroupBody $pad={8}>
          <Stack $pad="8px 0 0" $gap={8}>
            <Combo w={146} label="数字格式" value="常规" />
            <Row>
              <IconButton $w={24} aria-label="会计数字格式"><CurrencyIcon /></IconButton>
              <Drop w={12} label="会计数字格式选项" />
              <IconButton $w={34} aria-label="百分比样式"><Glyph $light $size={20}>%</Glyph></IconButton>
              <IconButton $w={20} aria-label="千位分隔样式">
                <svg width="10" height="14" viewBox="0 0 10 14"><path fill="#333" d="M5 1a3.500 3.500 0 1 0 .8 6.800Q5 11 2 12.500v1Q9 11 8.800 5 8.500 1 5 1z" /></svg>
              </IconButton>
              <Rule />
              <IconButton $w={22} aria-label="增加小数位数"><DecimalIcon more /></IconButton>
              <IconButton $w={28} aria-label="减少小数位数"><DecimalIcon /></IconButton>
            </Row>
          </Stack>
        </GroupBody>
        <Foot label="数字" launcher />
      </Group>

      <Group $w={478}>
        <GroupBody $pad={6}>
          <BigButton $w={56}>
            <BigIcon><ConditionalIcon /></BigIcon>
            条件格式
            <small><Chevron /></small>
          </BigButton>
          <BigButton $w={66}>
            <BigIcon><TableFormatIcon /></BigIcon>
            套用
            <small>表格格式<Chevron /></small>
          </BigButton>
          <Gallery>
            <Swatches>
              <Swatch $bg="#fff" $fg="#111" $kind="current">常规</Swatch>
              <Swatch $bg="#fbc3cb" $fg="#9c1c2b">差</Swatch>
              <Swatch $bg="#c2efca" $fg="#1f6b2a">好</Swatch>
              <Swatch $bg="#fde792" $fg="#9c6a14">适中</Swatch>
              <Swatch $bg="#f1f1f3" $fg="#ee8420" $kind="calc">计算</Swatch>
              <Swatch $bg="#999" $fg="#fff" $kind="check">检查单元格</Swatch>
            </Swatches>
            <GalleryScroll>
              <button aria-label="上一行"><Chevron up color="#aaa" /></button>
              <button aria-label="下一行"><Chevron /></button>
              <button aria-label="其他样式">
                <svg width="8" height="9" viewBox="0 0 8 9" fill="none" stroke="#333" strokeWidth="1.200"><path d="M1 1.500h6M1 4l3 3 3-3" /></svg>
              </button>
            </GalleryScroll>
          </Gallery>
        </GroupBody>
        <Foot label="样式" />
      </Group>

      <Group $w={146}>
        <GroupBody $pad={7}>
          <BigButton $w={44}><BigIcon><InsertIcon /></BigIcon>插入<small><Chevron /></small></BigButton>
          <BigButton $w={44}><BigIcon><DeleteIcon /></BigIcon>删除<small><Chevron /></small></BigButton>
          <BigButton $w={44}><BigIcon><FormatIcon /></BigIcon>格式<small><Chevron /></small></BigButton>
        </GroupBody>
        <Foot label="单元格" />
      </Group>

      <Group $w={247}>
        <GroupBody $pad={10}>
          <Stack>
            <TextButton><IconCell $w={22}><SigmaIcon /></IconCell>自动求和<IconCell $w={30}><Chevron /></IconCell></TextButton>
            <TextButton><IconCell $w={22}><FillIcon /></IconCell>填充<IconCell $w={16}><Chevron /></IconCell></TextButton>
            <TextButton><IconCell $w={22}><EraserIcon /></IconCell>清除<IconCell $w={16}><Chevron /></IconCell></TextButton>
          </Stack>
          <BigButton $w={58}><BigIcon><SortIcon /></BigIcon>排序和筛选<small><Chevron /></small></BigButton>
          <BigButton $w={76}><BigIcon><SearchIcon size={32} thin /></BigIcon>查找和选择<small><Chevron /></small></BigButton>
        </GroupBody>
        <Foot label="编辑" />
      </Group>

      <Group $w={58}>
        <GroupBody>
          <BigButton $w={58}><BigIcon><AnalyzeIcon /></BigIcon>分析<small>数据</small></BigButton>
        </GroupBody>
        <Foot label="分析" />
      </Group>
    </Ribbon>
  );
}

function Sheet() {
  return (
    <SheetTable>
      <colgroup>
        {widths.map((w, i) => <col key={i} style={{ width: w }} />)}
      </colgroup>
      <thead>
        <tr>
          {columns.map((c) => <ColumnHead key={c} scope="col" $on={c === "K"}>{c}</ColumnHead>)}
        </tr>
      </thead>
      <tbody>
        <tr>
          <TitleCell colSpan={9}>XLOOKUP</TitleCell>
          {columns.slice(9).map((c) => <Cell key={c} $h={102} $right={false} $bottom={false} />)}
        </tr>
        {Array.from({ length: 24 }, (_, r) => (
          <tr key={r}>
            {columns.map((name, c) => {
              const person = people[r - PEOPLE_ROW]?.[c];
              const found = inLookup(r, c) ? lookup[r - LOOKUP_ROW][c - LOOKUP_COL] : undefined;
              const fill: Fill = r === PEOPLE_ROW && c < 7 ? "blue" : r === LOOKUP_ROW && inLookup(r, c) ? "green" : "none";
              const selected = r === 10 && name === "K";
              return (
                <Cell
                  key={name}
                  $fill={fill}
                  $active={selected}
                  $right={framed(r, c) || framed(r, c + 1)}
                  $bottom={framed(r, c) || framed(r + 1, c)}
                >
                  {person ?? found}
                  {selected && (
                    <>
                      <Selection />
                      <Pointer width="26" height="32" viewBox="0 0 26 32">
                        <g stroke="#fff" strokeWidth="1" fill="#111">
                          <path d="m8 0 3.500 4H9v4h4V5.500L17 9l-4 3.500V10H9v5H7v-5H3.500v2.500L0 9l3.500-3.500V8H7V4H4.500z" />
                        </g>
                        <path d="M8 8v18l4-3.500 3 7 3-1.500-3-6.500h5z" fill="#fff" stroke="#111" />
                      </Pointer>
                    </>
                  )}
                </Cell>
              );
            })}
          </tr>
        ))}
      </tbody>
    </SheetTable>
  );
}

function SystemTray() {
  const line = { fill: "none", stroke: "#222", strokeWidth: 1.2 };
  return (
    <Tray>
      <TrayButton aria-label="显示隐藏的图标">
        <svg width="14" height="10" viewBox="0 0 14 10" {...line} strokeWidth={1.500}><path d="M1.500 8 7 2.500 12.500 8" /></svg>
      </TrayButton>
      <TrayButton aria-label="摄像头">
        <svg width="14" height="18" viewBox="0 0 14 18" {...line}><path d="M3 2.500Q7 0 10 2.500M3 15.500q4 2.500 7 0M2 5.500h7v7H2zM9 8l3-1.500v5L9 10" /></svg>
      </TrayButton>
      <TrayButton aria-label="麦克风">
        <svg width="14" height="18" viewBox="0 0 14 18" {...line}><path fill="#111" d="M4.500 1.500h5v9h-5z" /><path d="M1.500 8v3.500q0 2 2 2h7q2 0 2-2V8M7 13.500v3M4 16.500h6" /></svg>
      </TrayButton>
      <TrayButton aria-label="微信"><WeChat size={17} /></TrayButton>
      <TrayButton aria-label="网络">
        <svg width="18" height="16" viewBox="0 0 18 16" {...line}><path d="M6 2.500h11v9H4V8M10.500 11.500v3M6 14.500h9M1.500 1.500h4v4h-4zM3.500 5.500V9" /></svg>
      </TrayButton>
      <TrayButton aria-label="安全中心">
        <svg width="17" height="18" viewBox="0 0 17 18"><path fill="#fff" stroke="#2f4c9c" strokeWidth="1.500" d="M8.500 1 15.500 3v6q0 5-7 8-7-3-7-8V3z" /><path fill="#2f4c9c" d="m3.500 5 5 4 5-4v4q0 3.500-5 6-5-2.500-5-6z" /><path fill="none" stroke="#fff" strokeWidth="1.300" d="m5 9 3.500 3L12 9" /></svg>
      </TrayButton>
      <TrayButton aria-label="音量">
        <svg width="16" height="14" viewBox="0 0 16 14" {...line}><path d="M1 5h2.500L7 1.500v11L3.500 9H1zM9.500 4.500q1.500 2.500 0 5M11.800 2.800q3 4.200 0 8.400" /><path stroke="#999" d="M14 1q3 6 0 12" /></svg>
      </TrayButton>
      <TrayButton aria-label="输入法">
        <svg width="14" height="16" viewBox="0 0 14 16" fill="#f4f4ee" stroke="#555"><path d="M5.500 1h3L13 15h-3l-1-3H5l-1 3H1zM5.800 9h2.400L7 5z" /></svg>
      </TrayButton>
      <TrayButton $w={32} aria-label="QQ 浏览器">
        <svg width="17" height="17" viewBox="0 0 17 17"><rect width="17" height="17" rx="3" fill="#3e86c4" /><circle cx="8.500" cy="8" r="4.500" fill="none" stroke="#fff" strokeWidth="2" /><path d="m10 11 3 3" stroke="#fff" strokeWidth="2" /></svg>
      </TrayButton>
      <Clock>
        <time>19</time>
        <time>2023</time>
      </Clock>
    </Tray>
  );
}

export default function App() {
  return (
    <Shell>
      <GlobalStyle />
      <TitleBar>
        <TitleLeft>
          <Toggle role="switch" aria-checked="false" aria-label="自动保存">关</Toggle>
          <IconButton $w={10} aria-label="自定义快速访问工具栏">
            <svg width="8" height="8" viewBox="0 0 8 8" fill="none" stroke="#333"><path d="M0 .5h8M1.500 3.500 4 6l2.500-2.500" /></svg>
          </IconButton>
          <FileName>4月.xlsx <Chevron size={9} /></FileName>
        </TitleLeft>
        <SearchBox>
          <SearchIcon size={15} />
          <input type="search" placeholder="搜索" aria-label="搜索" />
        </SearchBox>
        <TitleRight>
          yh w
          <Avatar>YW</Avatar>
          <IconButton aria-label="高级版"><Diamond /></IconButton>
          <IconButton $w={66} aria-label="即将推出"><Megaphone /></IconButton>
          <IconButton aria-label="最小化">
            <svg width="11" height="2" viewBox="0 0 11 2"><path fill="#333" d="M0 0h11v1H0z" /></svg>
          </IconButton>
        </TitleRight>
      </TitleBar>
      <MenuBar>
        {menus.map((m) => <button key={m}>{m}</button>)}
        <CommentButton>
          <svg width="13" height="12" viewBox="0 0 13 12" fill="none" stroke="#333"><path d="M1.500 1.500h10v6.500h-6L3.500 10.500V8h-2z" /></svg>
          批注
        </CommentButton>
      </MenuBar>
      <RibbonBar />
      <FormulaBar>
        <NameBox aria-label="名称框"><Chevron size={9} /></NameBox>
        <Dots>
          <svg width="3" height="13" viewBox="0 0 3 13" fill="#444"><path d="M.5 0h2v2h-2zM.5 5h2v2h-2zM.5 10h2v2h-2z" /></svg>
        </Dots>
        <FxBox>
          <IconButton $w={24} aria-label="取消">
            <svg width="13" height="13" viewBox="0 0 13 13" stroke="#bdbdbd" strokeWidth="1.200"><path d="m.5.5 12 12M12.500.5l-12 12" /></svg>
          </IconButton>
          <IconButton $w={24} aria-label="输入">
            <svg width="16" height="12" viewBox="0 0 16 12" fill="none" stroke="#bdbdbd" strokeWidth="1.200"><path d="m.5 6.500 5 5L15.500.5" /></svg>
          </IconButton>
          <IconButton $w={22} aria-label="插入函数"><Glyph $italic $serif $size={19}>fx</Glyph></IconButton>
        </FxBox>
        <FormulaInput aria-label="编辑栏" />
      </FormulaBar>
      <SheetArea>
        <Sheet />
        <Caption>同时查询多列结果</Caption>
      </SheetArea>
      <TabStrip>
        <More aria-label="更多工作表">··</More>
        {sheets.map((s) => <SheetTab key={s} $wide={s.length > 6}>{s}</SheetTab>)}
        <ActiveTab><span>Sheet15</span></ActiveTab>
        <AddTab aria-label="新工作表">
          <svg width="12" height="12" viewBox="0 0 12 12" stroke="#444"><path d="M6 0v12M0 6h12" /></svg>
        </AddTab>
        <Dots $w={36}>
          <svg width="3" height="12" viewBox="0 0 3 12" fill="#444"><path d="M.5 0h2v2h-2zM.5 5h2v2h-2zM.5 10h2v2h-2z" /></svg>
        </Dots>
        <ScrollTrack>
          <svg width="7" height="10" viewBox="0 0 7 10"><path fill="#666" d="M7 0v10L0 5z" /></svg>
        </ScrollTrack>
      </TabStrip>
      <StatusBar>
        <StatusText>功能: 调查</StatusText>
        <ViewButton $on aria-label="普通">
          <svg width="14" height="13" viewBox="0 0 14 13" fill="none" stroke="#222"><path d="M.5.5h13v12H.5zM.5 4.500h13M.5 8.500h13M5 .5v12M9.500.5v12" /></svg>
        </ViewButton>
        <ViewButton aria-label="页面布局">
          <svg width="14" height="13" viewBox="0 0 14 13" fill="none" stroke="#222"><path d="M.5.5h13v12H.5zM3.500 2.500h7v8h-7zM5 4.500h4M5 6.500h4M5 8.500h4" /></svg>
        </ViewButton>
        <ViewButton aria-label="分页预览">
          <svg width="14" height="13" viewBox="0 0 14 13" fill="none" stroke="#222"><path d="M.5.5h13v12H.5zM4.500.5v7h5v-7M9.500 7.500h4" /></svg>
        </ViewButton>
        <IconButton $w={18} $h={20} aria-label="缩小">
          <svg width="8" height="1" viewBox="0 0 8 1"><path fill="#333" d="M0 0h8v1H0z" /></svg>
        </IconButton>
        <ZoomSlider type="range" min={0} max={100} defaultValue={60} aria-label="显示比例" />
      </StatusBar>
      <Taskbar>
        <TaskApp $running aria-label="OBS"><Obs /></TaskApp>
        <TaskApp aria-label="Chrome"><Chrome /></TaskApp>
        <TaskApp $running aria-label="浏览器"><CloudBrowser /></TaskApp>
        <TaskApp><AdobeTile $bg="#0a0558" $fg="#b9b4ff">Pr</AdobeTile></TaskApp>
        <TaskApp><AdobeTile $bg="#0b2138" $fg="#55b2f5">Ps</AdobeTile></TaskApp>
        <TaskApp aria-label="剪映"><Capcut /></TaskApp>
        <TaskApp aria-label="录屏"><Recorder /></TaskApp>
        <TaskApp $running aria-label="微信"><WeChat size={24} /></TaskApp>
        <TaskApp $running aria-label="Edge"><Edge /></TaskApp>
        <TaskApp $front><ExcelBlocks><span>X</span></ExcelBlocks></TaskApp>
        <SystemTray />
      </Taskbar>
    </Shell>
  );
}
